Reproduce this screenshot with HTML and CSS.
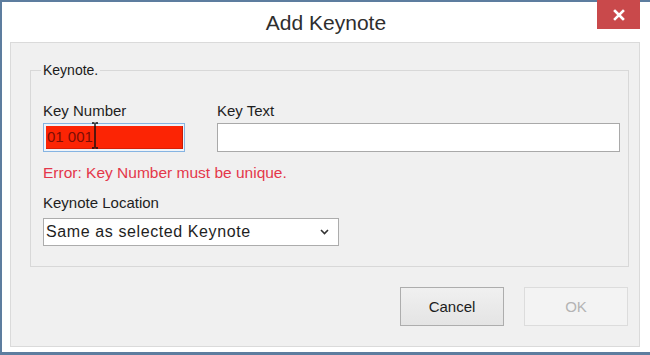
FILE: index.html
```html
<!DOCTYPE html>
<html>
<head>
<meta charset="utf-8">
<link rel="stylesheet" href="styles.css">
</head>
<body>
<div class="window">
  <div class="titlebar">
    <div class="title">Add Keynote</div>
    <div class="close">
      <svg width="14" height="12" viewBox="0 0 14 12"><path d="M3 2 L11 10 M11 2 L3 10" stroke="#fff" stroke-width="2.6" stroke-linecap="square"/></svg>
    </div>
  </div>
  <div class="panel">
    <fieldset class="group">
      <legend class="legend">Keynote.</legend>
      <div class="row">
        <div class="field num">
          <div class="label">Key Number</div>
          <div class="input focused">
            <div class="errfill">01 001</div>
            <svg class="ibeam" width="8" height="28" viewBox="0 0 8 28"><path d="M1 1 H3.5 M4.5 1 H7 M4 1.5 V25.5 M1 26 H3.5 M4.5 26 H7" stroke="#111" stroke-width="1.4" fill="none"/></svg>
          </div>
        </div>
        <div class="field text">
          <div class="label">Key Text</div>
          <div class="input"></div>
        </div>
      </div>
      <div class="error">Error: Key Number must be unique.</div>
      <div class="label loc">Keynote Location</div>
      <div class="select">
        <span class="seltext">Same as selected Keynote</span>
        <svg width="9" height="6" viewBox="0 0 9 6"><path d="M1 1 L4.5 4.5 L8 1" stroke="#333" stroke-width="1.6" fill="none"/></svg>
      </div>
    </fieldset>
    <div class="buttons">
      <div class="btn cancel">Cancel</div>
      <div class="btn ok">OK</div>
    </div>
  </div>
</div>
</body>
</html>
```
FILE: styles.css
```css
* { box-sizing: border-box; }
html, body { margin: 0; padding: 0; background: #fff; }
body { font-family: "Liberation Sans", Arial, sans-serif; color: #1e1e1e; }

.window {
  width: 650px;
  height: 355px;
  border-style: solid;
  border-color: #5d7d9f;
  border-width: 2px 0 3px 2px;
  background: #fff;
  display: flex;
  flex-direction: column;
}

.titlebar {
  height: 40px;
  display: grid;
  grid-template-columns: 1fr auto 1fr;
  align-items: start;
}
.title {
  grid-column: 2;
  font-size: 21px;
  line-height: 24px;
  margin-top: 9px;
  color: #2e2e2e;
}
.close {
  grid-column: 3;
  justify-self: end;
  margin-right: 10px;
  margin-top: -2px;
  width: 43px;
  height: 29px;
  background: #c9494b;
  display: flex;
  align-items: center;
  justify-content: center;
}

.panel {
  margin: 0 10px 5px 8px;
  flex: 1;
  background: #f0f0f0;
  border: 1px solid #dadada;
  padding: 19px 10px 0 19px;
}

.group {
  margin: 0;
  border: 1px solid #d8d8d8;
  padding: 24px 8px 20px 12px;
  min-width: 0;
}
.legend {
  font-size: 14px;
  line-height: 16px;
  padding: 0 2px;
  margin-left: -2px;
  color: #1a1a1a;
}

.row {
  display: grid;
  grid-template-columns: 142px 1fr;
  column-gap: 32px;
}
.label {
  font-size: 15px;
  line-height: 18px;
  color: #1e1e1e;
}
.input {
  margin-top: 3px;
  height: 29px;
  border: 1px solid #a9a9a9;
  background: #fff;
  position: relative;
}
.input.focused {
  border-color: #86b4e2;
  background: #eef3f9;
  padding: 2px 1px 2px 2px;
}
.errfill {
  height: 100%;
  background: #fc2404;
  border-right: 1px solid #c81c08;
  border-bottom: 1px solid #d81e06;
  color: #7a0e06;
  font-size: 15px;
  line-height: 22px;
  padding-left: 1px;
}
.ibeam {
  position: absolute;
  left: 47px;
  top: -2px;
}

.error {
  margin-top: 12px;
  font-size: 15.5px;
  line-height: 18px;
  color: #e4374a;
}
.loc { margin-top: 12px; }

.select {
  margin-top: 6px;
  width: 296px;
  height: 28px;
  border: 1px solid #acacac;
  background: #fff;
  display: flex;
  align-items: center;
  justify-content: space-between;
  padding: 0 9px 0 2px;
}
.seltext {
  font-size: 16px;
  letter-spacing: 0.6px;
  color: #1e1e1e;
}

.buttons {
  display: flex;
  justify-content: flex-end;
  gap: 20px;
  margin-top: 20px;
  padding-right: 1px;
}
.btn {
  width: 104px;
  height: 39px;
  display: flex;
  align-items: center;
  justify-content: center;
  font-size: 15px;
}
.cancel {
  border: 1px solid #adadad;
  background: linear-gradient(#f0f0f0, #e4e4e4);
  color: #1c1c1c;
}
.ok {
  border: 1px solid #dcdcdc;
  background: #f3f3f3;
  color: #b4b4b4;
}
```
